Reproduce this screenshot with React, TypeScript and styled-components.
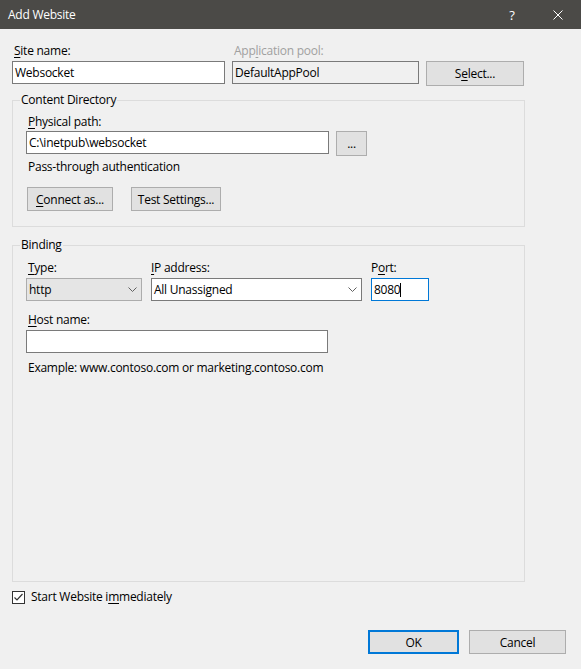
import styled, { createGlobalStyle } from "styled-components";

const GlobalStyle = createGlobalStyle`
  html, body {
    margin: 0;
    padding: 0;
    background: #f0f0f0;
  }
  body {
    font-family: "Open Sans", "Noto Sans", sans-serif;
    font-size: 12px;
    letter-spacing: -0.25px;
    color: #000;
  }
`;

const Window = styled.div`
  width: 581px;
  height: 669px;
  display: flex;
  flex-direction: column;
  background: #f0f0f0;
  overflow: hidden;
`;

const TitleBar = styled.div`
  height: 29px;
  flex: none;
  display: flex;
  align-items: center;
  background: #4b4a47;
  color: #fff;
`;

const Title = styled.div`
  flex: 1;
  padding-left: 8px;
  line-height: 16px;
`;

const TitleButton = styled.div`
  width: 46px;
  height: 29px;
  display: flex;
  align-items: center;
  justify-content: center;
  font-size: 13px;
`;

const Body = styled.div`
  flex: 1;
  display: flex;
  flex-direction: column;
  padding: 14px 15px 15px 12px;
  min-height: 0;
`;

const TopRow = styled.div`
  display: grid;
  grid-template-columns: 213px 187px 98px;
  column-gap: 7px;
  row-gap: 2px;
  align-items: start;
`;

const Label = styled.div<{ $disabled?: boolean; $flush?: boolean }>`
  line-height: 16px;
  padding-left: ${(p) => (p.$flush ? 0 : 2)}px;
  white-space: nowrap;
  color: ${(p) => (p.$disabled ? "#a0a0a0" : "#000")};
`;

const Key = styled.span`
  text-decoration: underline;
  text-underline-offset: 2px;
`;

const TextBox = styled.div<{ $w?: number; $focus?: boolean; $disabled?: boolean }>`
  box-sizing: border-box;
  width: ${(p) => (p.$w ? `${p.$w}px` : "100%")};
  height: 23px;
  padding: 0 2px;
  line-height: 21px;
  white-space: nowrap;
  overflow: hidden;
  background: ${(p) => (p.$disabled ? "#f0f0f0" : "#fff")};
  border: 1px solid ${(p) => (p.$focus ? "#0078d7" : "#7a7a7a")};
  display: flex;
  align-items: center;
`;

const Caret = styled.span`
  display: inline-block;
  width: 1px;
  height: 14px;
  background: #000;
`;

const Combo = styled.div<{ $readonly?: boolean }>`
  box-sizing: border-box;
  height: 23px;
  display: flex;
  align-items: center;
  padding-left: 2px;
  background: ${(p) => (p.$readonly ? "#e5e5e5" : "#fff")};
  border: 1px solid ${(p) => (p.$readonly ? "#acacac" : "#7a7a7a")};
`;

const ComboText = styled.span`
  flex: 1;
  line-height: 21px;
  white-space: nowrap;
`;

const ComboArrow = styled.span`
  width: 17px;
  height: 21px;
  display: flex;
  align-items: center;
  justify-content: center;
`;

const Button = styled.div<{ $w: number; $h?: number; $default?: boolean }>`
  box-sizing: border-box;
  width: ${(p) => p.$w}px;
  height: ${(p) => p.$h ?? 24}px;
  display: flex;
  align-items: center;
  justify-content: center;
  background: #e1e1e1;
  border: ${(p) => (p.$default ? "2px solid #0078d7" : "1px solid #adadad")};
  white-space: nowrap;
`;

const GroupBox = styled.fieldset<{ $grow?: boolean; $top: number }>`
  box-sizing: border-box;
  width: 513px;
  min-width: 0;
  margin: ${(p) => p.$top}px 0 0 0;
  padding: 6px 13px 15px 13px;
  border: 1px solid #dcdcdc;
  flex: ${(p) => (p.$grow ? "1" : "none")};
`;

const GroupTitle = styled.legend`
  margin-left: -6px;
  padding: 0 1px;
  line-height: 16px;
`;

const PathRow = styled.div`
  display: flex;
  align-items: flex-start;
  gap: 7px;
  margin-top: 1px;
`;

const Note = styled.div<{ $top: number }>`
  margin-top: ${(p) => p.$top}px;
  padding-left: 2px;
  line-height: 16px;
  white-space: nowrap;
`;

const ButtonRow = styled.div`
  display: flex;
  gap: 18px;
  margin-top: 12px;
  padding-left: 1px;
`;

const BindingGrid = styled.div`
  display: grid;
  grid-template-columns: 116px 211px 58px;
  column-gap: 9px;
  row-gap: 2px;
  padding-top: 1px;
`;

const FieldLabel = styled(Label)<{ $top: number }>`
  margin-top: ${(p) => p.$top}px;
  margin-bottom: 2px;
`;

const CheckRow = styled.div`
  display: flex;
  align-items: center;
  gap: 6px;
  margin-top: 7px;
  line-height: 16px;
`;

const CheckBox = styled.span`
  box-sizing: border-box;
  width: 13px;
  height: 13px;
  border: 1px solid #333;
  background: #fff;
  display: flex;
  align-items: center;
  justify-content: center;
`;

const Footer = styled.div`
  display: flex;
  justify-content: flex-end;
  gap: 10px;
  margin-top: 25px;
`;

const Chevron = () => (
  <svg width="9" height="5" viewBox="0 0 9 5">
    <polyline points="0.5,0.5 4.5,4.5 8.5,0.5" fill="none" stroke="#606060" strokeWidth="1" />
  </svg>
);

export default function App() {
  return (
    <Window>
      <GlobalStyle />
      <TitleBar>
        <Title>Add Website</Title>
        <TitleButton>?</TitleButton>
        <TitleButton>
          <svg width="10" height="10" viewBox="0 0 10 10">
            <path d="M0.5 0.5 L9.5 9.5 M9.5 0.5 L0.5 9.5" stroke="#fff" strokeWidth="1" />
          </svg>
        </TitleButton>
      </TitleBar>

      <Body>
        <TopRow>
          <Label>
            <Key>S</Key>ite name:
          </Label>
          <Label $disabled>
            App<Key>l</Key>ication pool:
          </Label>
          <span />
          <TextBox>Websocket</TextBox>
          <TextBox $disabled>DefaultAppPool</TextBox>
          <Button $w={98} $h={25}>
            S<Key>e</Key>lect...
          </Button>
        </TopRow>

        <GroupBox $top={6}>
          <GroupTitle>Content Directory</GroupTitle>
          <Label>
            <Key>P</Key>hysical path:
          </Label>
          <PathRow>
            <TextBox $w={303}>C:\inetpub\websocket</TextBox>
            <Button $w={31} $h={25}>
              ...
            </Button>
          </PathRow>
          <Note $top={3}>Pass-through authentication</Note>
          <ButtonRow>
            <Button $w={86}>
              <Key>C</Key>onnect as...
            </Button>
            <Button $w={90}>
              Test Settin<Key>g</Key>s...
            </Button>
          </ButtonRow>
        </GroupBox>

        <GroupBox $top={10} $grow>
          <GroupTitle>Binding</GroupTitle>
          <BindingGrid>
            <Label>
              <Key>T</Key>ype:
            </Label>
            <Label $flush>
              <Key>I</Key>P address:
            </Label>
            <Label $flush>
              P<Key>o</Key>rt:
            </Label>
            <Combo $readonly>
              <ComboText>http</ComboText>
              <ComboArrow>
                <Chevron />
              </ComboArrow>
            </Combo>
            <Combo>
              <ComboText>All Unassigned</ComboText>
              <ComboArrow>
                <Chevron />
              </ComboArrow>
            </Combo>
            <TextBox $focus>
              8080
              <Caret />
            </TextBox>
          </BindingGrid>
          <FieldLabel $top={11}>
            <Key>H</Key>ost name:
          </FieldLabel>
          <TextBox $w={302} />
          <Note $top={7}>Example: www.contoso.com or marketing.contoso.com</Note>
        </GroupBox>

        <CheckRow>
          <CheckBox>
            <svg width="11" height="11" viewBox="0 0 11 11">
              <polyline points="1.5,5.5 4,8 9.5,2" fill="none" stroke="#333" strokeWidth="1.2" />
            </svg>
          </CheckBox>
          <span>
            Start Website i<Key>m</Key>mediately
          </span>
        </CheckRow>

        <Footer>
          <Button $w={91} $default>
            OK
          </Button>
          <Button $w={97}>Cancel</Button>
        </Footer>
      </Body>
    </Window>
  );
}
